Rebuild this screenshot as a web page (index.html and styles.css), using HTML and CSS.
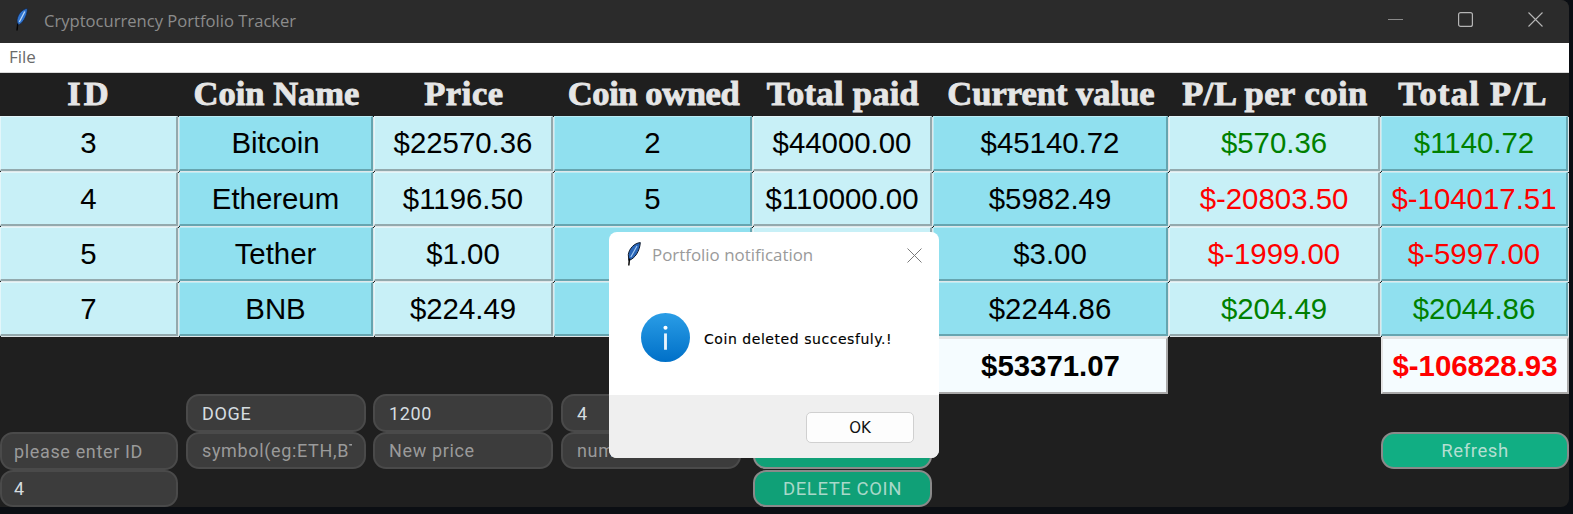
FILE: index.html
```html
<!DOCTYPE html>
<html lang="en">
<head>
<meta charset="utf-8">
<title>Cryptocurrency Portfolio Tracker</title>
<link rel="stylesheet" href="styles.css">
</head>
<body>
<div class="window">
  <header class="titlebar">
    <svg class="feather" viewBox="0 0 12 23"><path d="M11.500 .5C6.500 .8 1.800 6 1 12L1.500 17.500C7 15.500 11 8.500 11.500 .5Z" fill="#2f72cc" stroke="#14213a" stroke-width=".7"/><path d="M8.800 3.500L3.300 14" stroke="#b9d8f8" stroke-width="1.300"/><path d="M1.800 15.500L1 22.500" stroke="#050505" stroke-width="1.400"/></svg>
    <span class="title">Cryptocurrency Portfolio Tracker</span>
    <div class="controls">
      <svg class="ctl" viewBox="0 0 15 15"><path d="M0 7.500H15" stroke="#8a8a8a" fill="none"/></svg>
      <svg class="ctl" viewBox="0 0 15 15"><rect x=".6" y=".6" width="13.800" height="13.800" rx="2" stroke="#b5b5b5" stroke-width="1.200" fill="none"/></svg>
      <svg class="ctl" viewBox="0 0 15 15"><path d="M.5 .5L14.500 14.500M14.500 .5L.5 14.500" stroke="#b5b5b5" stroke-width="1.100" fill="none"/></svg>
    </div>
  </header>
  <nav class="menubar"><span class="menu-item">File</span></nav>
  <main class="grid">
    <div class="th th-id">ID</div><div class="th">Coin Name</div><div class="th th-price">Price</div><div class="th th-owned">Coin owned</div><div class="th th-paid">Total paid</div><div class="th">Current value</div><div class="th th-plc">P/L per coin</div><div class="th th-total">Total P/L</div>

    <div class="td light">3</div><div class="td dark">Bitcoin</div><div class="td light">$22570.36</div><div class="td dark">2</div><div class="td light">$44000.00</div><div class="td dark">$45140.72</div><div class="td light up">$570.36</div><div class="td dark up">$1140.72</div>

    <div class="td light">4</div><div class="td dark">Ethereum</div><div class="td light">$1196.50</div><div class="td dark">5</div><div class="td light">$110000.00</div><div class="td dark">$5982.49</div><div class="td light down">$-20803.50</div><div class="td dark down">$-104017.51</div>

    <div class="td light">5</div><div class="td dark">Tether</div><div class="td light">$1.00</div><div class="td dark"></div><div class="td light"></div><div class="td dark">$3.00</div><div class="td light down">$-1999.00</div><div class="td dark down">$-5997.00</div>

    <div class="td light">7</div><div class="td dark">BNB</div><div class="td light">$224.49</div><div class="td dark"></div><div class="td light"></div><div class="td dark">$2244.86</div><div class="td light up">$204.49</div><div class="td dark up">$2044.86</div>

    <div class="total-row">
      <div class="total col-6">$53371.07</div>
      <div class="total col-8 down">$-106828.93</div>
    </div>

    <div class="form">
      <div class="field at-2-1"><span class="val">DOGE</span></div>
      <div class="field at-3-1"><span class="val">1200</span></div>
      <div class="field at-4-1"><span class="val">4</span></div>
      <div class="field hint at-1-2"><span class="val">please enter ID</span></div>
      <div class="field hint at-2-2"><span class="val">symbol(eg:ETH,BTC)</span></div>
      <div class="field hint at-3-2"><span class="val">New price</span></div>
      <div class="field hint at-4-2"><span class="val">number of coins</span></div>
      <div class="btn at-5-2"></div>
      <div class="btn bright at-8-2">Refresh</div>
      <div class="field at-1-3"><span class="val">4</span></div>
      <div class="btn at-5-3">DELETE COIN</div>
    </div>
  </main>

  <section class="dialog">
    <div class="dlg-head">
      <svg class="dlg-feather" viewBox="0 0 14 24"><path d="M13.300 .6C7.500 1 2.200 6.500 1.300 12.500L1.800 18.500C8 16.500 12.800 9 13.300 .6Z" fill="#2a66b8" stroke="#0f1a2c" stroke-width="1"/><path d="M10 4L3.800 15" stroke="#a8cdf5" stroke-width="1.100"/><path d="M2.500 16.500L1.800 23.500" stroke="#050505" stroke-width="1.500"/></svg>
      <span class="dlg-title">Portfolio notification</span>
      <svg class="dlg-close" viewBox="0 0 15 15"><path d="M.5 .5L14.500 14.500M14.500 .5L.5 14.500" stroke="#7a7a7a" stroke-width="1" fill="none"/></svg>
    </div>
    <div class="dlg-body">
      <svg class="info" viewBox="0 0 48 48">
        <defs><linearGradient id="infoFill" x1="0" y1="0" x2="0" y2="1"><stop offset="0" stop-color="#2a9de6"/><stop offset="1" stop-color="#0070c8"/></linearGradient></defs>
        <circle cx="24" cy="24" r="24" fill="url(#infoFill)"/>
        <circle cx="24" cy="14.500" r="2" fill="#fff"/>
        <rect x="22.600" y="20" width="2.800" height="16" fill="#e8f4fc"/>
      </svg>
      <span class="dlg-msg">Coin deleted succesfuly.!</span>
    </div>
    <div class="dlg-foot"><button class="ok">OK</button></div>
  </section>
</div>
</body>
</html>
```
FILE: styles.css
```css
* { box-sizing: border-box; }
html, body { margin: 0; height: 100%; overflow: hidden; background: #0b0e13; }
body { width: 1573px; height: 514px; }
.window {
  position: relative;
  width: 1569px;
  height: 507px;
  background: #1f1f1f;
  border-radius: 0 8px 8px 0;
  overflow: hidden;
}
.titlebar {
  height: 43px;
  background: #2b2b2b;
  display: flex;
  align-items: center;
  padding-left: 16px;
}
.feather { width: 12px; height: 23px; margin-right: 16px; margin-top: -5px; flex: none; }
.title { font: 16.600px "Open Sans", sans-serif; color: #8c8c8c; margin-top: -2px; }
.controls { margin-left: auto; display: flex; gap: 55px; padding-right: 26px; align-items: center; margin-top: -4px; }
.ctl { width: 15px; height: 15px; display: block; }
.menubar {
  height: 30px;
  background: #fff;
  border-bottom: 1px solid #d9d9d9;
  display: flex;
  align-items: center;
  padding: 0 0 2px 9px;
}
.menu-item { font: 17px "Open Sans", sans-serif; color: #6a6a6a; }
.grid {
  display: grid;
  grid-template-columns: 179px 195px 180px 199px 180px 236px 212px 188px;
  grid-template-rows: 43px 56px 55px 55px 55px 57px;
  width: 1569px;
}
.th {
  display: flex;
  align-items: center;
  justify-content: center;
  font: bold 34.500px "Liberation Serif", serif;
  -webkit-text-stroke: .9px #e6e6e6;
  color: #e6e6e6;
  white-space: nowrap;
  padding-bottom: 3px;
}
.th-id { letter-spacing: 3px; }
.th-price { letter-spacing: .6px; }
.th-owned { letter-spacing: -.4px; }
.th-paid { letter-spacing: .3px; }
.th-plc { letter-spacing: .5px; }
.th-total { letter-spacing: 1.300px; padding-right: 4px; }
.td {
  display: flex;
  align-items: center;
  justify-content: center;
  font: 29.400px "Liberation Sans", sans-serif;
  color: #000;
  border: 2px solid #93a9ad;
  border-top: 1px solid #e3f6fa;
  border-left: 1px solid #e3f6fa;
  white-space: nowrap;
  margin: 0 1px 1px 0;
  box-shadow: 1px 1px 0 #dfe6e8;
}
.light { background: #c8f0f7; }
.dark { background: #90e0ef; border-right-color: #66a5b0; border-bottom-color: #66a5b0; border-top-color: #b8ecf5; border-left-color: #b8ecf5; }
.up { color: #008000; }
.down { color: #f00; }
.total-row { display: grid; grid-column: 1 / -1; grid-template-columns: subgrid; }
.total {
  display: flex;
  align-items: center;
  justify-content: center;
  font: bold 29.400px "Liberation Sans", sans-serif;
  background: #f5fcff;
  border: 2px solid #a9a9a9;
  border-top-color: #e4e4e4;
  border-left-color: #e4e4e4;
  white-space: nowrap;
  margin-right: 1px;
}
.col-6 { grid-column: 6; }
.col-8 { grid-column: 8; margin-right: 0; }
.form {
  grid-column: 1 / -1;
  display: grid;
  grid-template-columns: subgrid;
  grid-template-rows: 38px 38px 37px;
  height: 113px;
}
.field {
  background: #3c3c3c;
  border: 2px solid #4a4a4a;
  border-radius: 13px;
  font: 18px Roboto, sans-serif;
  letter-spacing: .65px;
  color: #d6dde0;
  display: flex;
  align-items: center;
  padding: 0 12px 0 14px;
  width: 180px;
  height: 38px;
}
.val { flex: 1; overflow: hidden; white-space: nowrap; }
.hint { color: #9a9a9a; }
.btn {
  background: #10a077;
  border: 2px solid #8a8a8a;
  border-radius: 13px;
  font: 18.500px Roboto, sans-serif;
  letter-spacing: .6px;
  color: #a9d8c9;
  display: flex;
  align-items: center;
  justify-content: center;
  white-space: nowrap;
  margin-right: 1px;
}
.bright { background: #11ae83; color: #b4dfd2; margin-right: 0; height: 37px; }
.at-1-2 { grid-column: 1; grid-row: 2; width: 178px; padding-left: 12px; }
.at-1-3 { grid-column: 1; grid-row: 3; width: 178px; padding-left: 12px; height: 37px; }
.at-2-1 { grid-column: 2; grid-row: 1; margin-left: 7px; }
.at-2-2 { grid-column: 2; grid-row: 2; margin-left: 7px; height: 37px; }
.at-3-1 { grid-column: 3; grid-row: 1; margin-left: -1px; }
.at-3-2 { grid-column: 3; grid-row: 2; margin-left: -1px; height: 37px; }
.at-4-1 { grid-column: 4; grid-row: 1; margin-left: 7px; }
.at-4-2 { grid-column: 4; grid-row: 2; margin-left: 7px; height: 37px; }
.at-5-2 { grid-column: 5; grid-row: 2; height: 37px; }
.at-5-3 { grid-column: 5; grid-row: 3; }
.at-8-2 { grid-column: 8; grid-row: 2; }
.dialog {
  position: absolute;
  left: 609px;
  top: 232px;
  width: 330px;
  height: 226px;
  background: #fff;
  border-radius: 8px;
  overflow: hidden;
  display: flex;
  flex-direction: column;
}
.dlg-head { height: 48px; flex: none; display: flex; align-items: center; padding: 0 17px 0 18px; }
.dlg-feather { width: 14px; height: 24px; margin: -5px 11px 0 0; flex: none; }
.dlg-title { font: 16.900px "Open Sans", sans-serif; color: #9a9a9a; margin-top: -3px; }
.dlg-close { width: 15px; height: 15px; margin: -2px 0 0 auto; }
.dlg-body { flex: 1; display: flex; align-items: center; padding: 0 0 1px 32px; gap: 14px; }
.info { width: 49px; height: 49px; flex: none; }
.dlg-msg { font: 14px "DejaVu Sans", sans-serif; color: #000; letter-spacing: .55px; margin-top: 4px; -webkit-text-stroke: .15px #000; }
.dlg-foot { height: 63px; flex: none; background: #efefef; display: flex; align-items: center; justify-content: flex-end; padding: 1px 25px 0 0; }
.ok {
  width: 108px;
  height: 31px;
  background: #fdfdfd;
  border: 1px solid #d0d0d0;
  border-radius: 5px;
  font: 15px "DejaVu Sans", sans-serif;
  color: #111;
  padding: 2px 0 0;
}
```
